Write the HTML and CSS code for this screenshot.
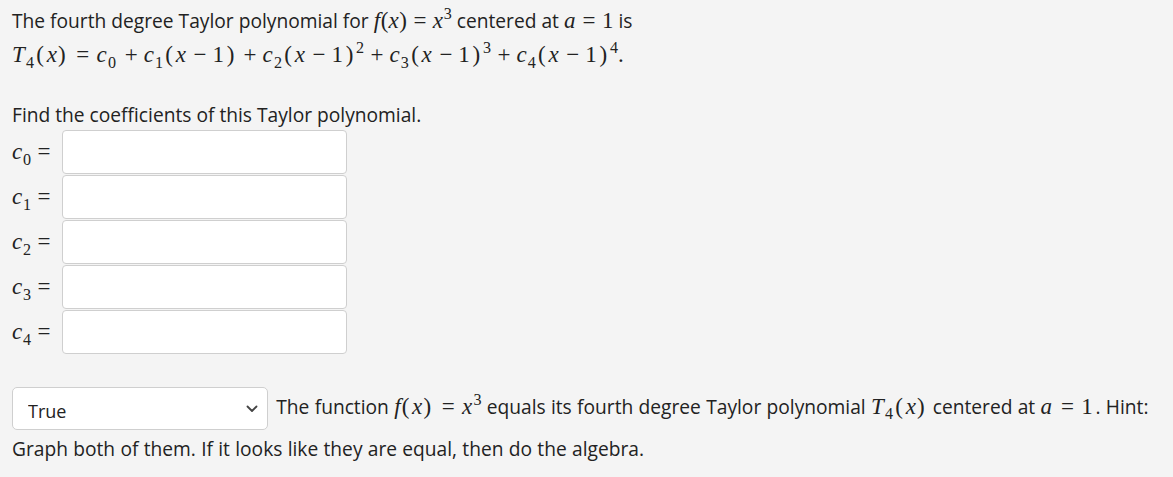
FILE: index.html
```html
<!DOCTYPE html>
<html>
<head>
<meta charset="utf-8">
<link rel="stylesheet" href="styles.css">
</head>
<body>
<div class="page">
  <p class="intro">The fourth degree Taylor polynomial for <span class="m"><i>f</i>(<i>x</i>)<span class="rel">=</span><i>x</i><sup>3</sup></span> centered at <span class="m"><i>a</i><span class="rel">=</span>1</span> is<br>
  <span class="m wide"><i>T</i><sub>4</sub>(<i>x</i>)<span class="rel">=</span><i>c</i><sub>0</sub><span class="bin">+</span><i>c</i><sub>1</sub>(<i>x</i><span class="bin">−</span>1)<span class="bin">+</span><i>c</i><sub>2</sub>(<i>x</i><span class="bin">−</span>1)<sup>2</sup><span class="bin">+</span><i>c</i><sub>3</sub>(<i>x</i><span class="bin">−</span>1)<sup>3</sup><span class="bin">+</span><i>c</i><sub>4</sub>(<i>x</i><span class="bin">−</span>1)<sup>4</sup>.</span></p>
  <p class="find">Find the coefficients of this Taylor polynomial.</p>
  <div class="rows">
    <div class="row"><span class="m lbl"><i>c</i><sub>0</sub><span class="rel">=</span></span><input class="box" type="text"></div>
    <div class="row"><span class="m lbl"><i>c</i><sub>1</sub><span class="rel">=</span></span><input class="box" type="text"></div>
    <div class="row"><span class="m lbl"><i>c</i><sub>2</sub><span class="rel">=</span></span><input class="box" type="text"></div>
    <div class="row"><span class="m lbl"><i>c</i><sub>3</sub><span class="rel">=</span></span><input class="box" type="text"></div>
    <div class="row"><span class="m lbl"><i>c</i><sub>4</sub><span class="rel">=</span></span><input class="box" type="text"></div>
  </div>
  <p class="tf"><span class="selwrap"><select class="sel"><option>True</option><option>False</option></select><svg class="chev" width="12" height="8" viewBox="0 0 12 8"><path d="M1.5 1.5 L6 6 L10.5 1.5" fill="none" stroke="#444" stroke-width="1.8" stroke-linecap="round" stroke-linejoin="round"/></svg></span> The function <span class="m wide"><i>f</i>(<i>x</i>)<span class="rel">=</span><i>x</i><sup>3</sup></span> equals its fourth degree Taylor polynomial <span class="m wide"><i>T</i><sub>4</sub>(<i>x</i>)</span> centered at <span class="m wide"><i>a</i><span class="rel">=</span>1</span>. Hint: Graph both of them. If it looks like they are equal, then do the algebra.</p>
</div>
</body>
</html>
```
FILE: styles.css
```css
html, body {
  margin: 0;
  padding: 0;
  background: #f4f4f4;
}
.page {
  padding: 4px 12px;
  font-family: "Open Sans", "Noto Sans", sans-serif;
  font-size: 19.2px;
  color: #222;
}
p {
  margin: 0;
}
.intro {
  line-height: 34px;
}
.m {
  font-family: "Liberation Serif", serif;
  font-size: 23px;
  white-space: nowrap;
  word-spacing: 0;
}
.m i {
  font-style: italic;
  padding-right: 0.03em;
}
.m sub, .m sup {
  font-style: normal;
  font-size: 0.7em;
  line-height: 0;
  letter-spacing: 0;
}
.rel {
  margin: 0 0.28em;
}
.bin {
  margin: 0 0.22em;
}
.wide {
  letter-spacing: 0.12em;
}
.wide i {
  letter-spacing: 0.02em;
}
.wide sub {
  margin-right: 0.14em;
}
.wide .rel {
  margin: 0 0.2em 0 0.34em;
}
.wide .bin {
  margin: 0 0.14em 0 0.28em;
}
.find {
  margin-top: 30px;
  margin-bottom: 2px;
  line-height: 26px;
}
.rows {
  display: flex;
  flex-direction: column;
  gap: 1px;
}
.row {
  display: flex;
  align-items: center;
}
.lbl {
  width: 50px;
}
.box {
  width: 285px;
  height: 44px;
  box-sizing: border-box;
  border: 1px solid #cfcfcf;
  border-radius: 4px;
  background: #fff;
  margin: 0;
}
.tf {
  margin-top: 33px;
  line-height: 38px;
  word-spacing: 0.3px;
}
.selwrap {
  position: relative;
  display: inline-block;
  vertical-align: middle;
  margin-right: 3px;
}
.sel {
  appearance: none;
  -webkit-appearance: none;
  width: 256px;
  height: 43px;
  border: 1px solid #cfcfcf;
  border-radius: 5px;
  background: #fff;
  font-family: "Open Sans", "Noto Sans", sans-serif;
  font-size: 18px;
  color: #222;
  padding: 4px 15px 0;
  display: block;
}
.chev {
  position: absolute;
  right: 10px;
  top: 18px;
  pointer-events: none;
}
```
